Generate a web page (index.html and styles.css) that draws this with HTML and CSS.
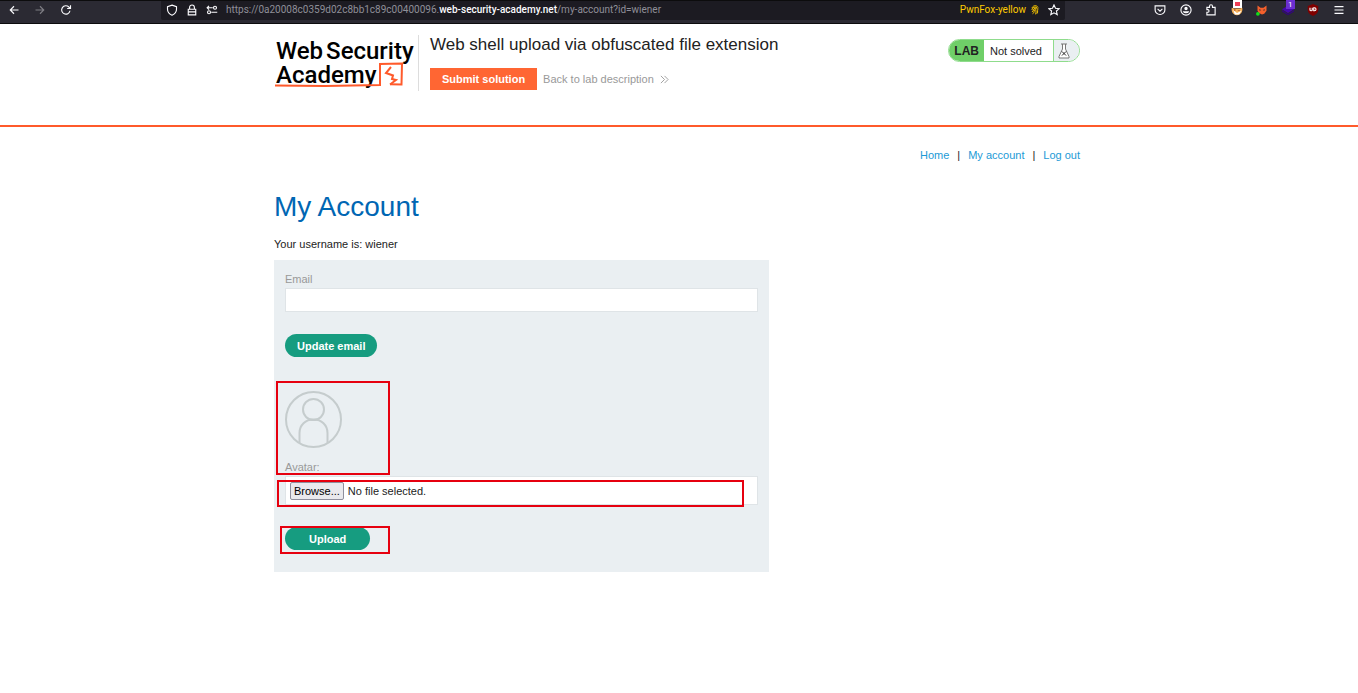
FILE: index.html
```html
<!DOCTYPE html>
<html lang="en">
<head>
  <meta charset="utf-8">
  <title>Web shell upload via obfuscated file extension</title>
  <link rel="stylesheet" href="styles.css">
</head>
<body>
  <div class="toolbar">
    <div class="toolbar-nav">
      <button type="button" aria-label="Back">
        <svg viewBox="0 0 16 16"><path d="M14 8H3M8 3 3 8l5 5"/></svg>
      </button>
      <button type="button" class="dim" aria-label="Forward">
        <svg viewBox="0 0 16 16"><path d="M2 8h11M8 3l5 5-5 5"/></svg>
      </button>
      <button type="button" aria-label="Reload">
        <svg viewBox="0 0 16 16"><path d="M13.3 9A5.6 5.6 0 1 1 11.800 4L13.500 5.600M14 1.500V6H9.500"/></svg>
      </button>
    </div>
    <div class="address">
      <svg viewBox="0 0 16 16"><path d="M8 1.500 14 3.600V7c0 4-2.500 6.500-6 8-3.500-1.500-6-4-6-8V3.600z"/></svg>
      <svg viewBox="0 0 16 16"><path d="M4.800 7V4.500a3.200 3.200 0 0 1 6.400 0V7M3 7h10v7.500H3zM3 10.500h10"/></svg>
      <svg viewBox="0 0 16 16"><path d="M1 5h8M7 11h8M4 2.500 1.500 5 4 7.500"/><circle cx="12" cy="5" r="2"/><circle cx="4" cy="11" r="2"/></svg>
      <div class="url">https://0a20008c0359d02c8bb1c89c00400096.<b>web-security-academy.net</b>/my-account?id=wiener</div>
      <span class="container-name">PwnFox-yellow</span>
      <svg class="finger" viewBox="0 0 16 16"><path d="M3 5c2-5 8-5 10-1M3 8c1-6 9-6 10-1M3 11c3 0 2-6 5-6s5 3 4 7M4 14c4-1 2-7 4-7s2 4 1 8M11 14l1-3"/></svg>
      <button type="button" aria-label="Bookmark">
        <svg viewBox="0 0 16 16"><path d="M8 1.200 10 5.700l4.900.5-3.700 3.200 1.100 4.900L8 11.800l-4.300 2.500 1.100-4.900L1.100 6.200 6 5.700z"/></svg>
      </button>
    </div>
    <div class="toolbar-ext">
      <button type="button" aria-label="Pocket">
        <svg viewBox="0 0 16 16"><path d="M1.500 2.500h13V8a6.500 6 0 0 1-13 0zM4.800 6.500 8 9.500l3.200-3"/></svg>
      </button>
      <button type="button" aria-label="Account">
        <svg viewBox="0 0 16 16"><circle cx="8" cy="8" r="6.800"/><circle class="solid" cx="8" cy="6" r="1.500"/><path class="solid" d="M5 10.500h6c-1 1.500-5 1.500-6 0z"/></svg>
      </button>
      <button type="button" aria-label="Extensions">
        <svg viewBox="0 0 16 16"><path d="M6 4.500V3a2 2 0 0 1 4 0v1.500h3.500v10h-11v-3.500H4a1.800 1.800 0 0 0 0-3.500H2.500v-3z"/></svg>
      </button>
      <button type="button" class="ext" aria-label="FoxyProxy">
        <svg viewBox="0 0 16 16"><path fill="#f6b25c" d="M1 5l3 1h8l3-1c1 5-2 10-7 10S0 10 1 5z"/><path fill="#fff" d="M3 8l5 4 6-3-3 5H5z"/><path fill="#b65b2a" d="M4 7h2v2H4zM9 8h3v1H9z"/></svg>
        <span class="badge badge-stop"></span>
      </button>
      <button type="button" class="ext" aria-label="PwnFox">
        <svg viewBox="0 0 16 16"><path fill="#f4602c" d="M2 2l4 3h4l4-3v7l-3 4-3 1-4-2-2-3z"/><path fill="#2b2a33" d="M4 7l3 1-2 1zM12 7L9 8l2 1z"/><circle cx="2.500" cy="13" r="2.500" fill="#12e01a"/></svg>
      </button>
      <button type="button" class="ext" aria-label="Wappalyzer">
        <svg viewBox="0 0 16 16"><path fill="#4608ad" d="M8 2l8 5-8 5-8-5z"/><path fill="#32067c" d="M0 8l8 5 8-5v2l-8 5-8-5z"/></svg>
        <span class="badge badge-count">1</span>
      </button>
      <button type="button" class="ext" aria-label="uBlock">
        <svg viewBox="0 0 16 16"><path fill="#800000" d="M8 0l7 2.500V8c0 4-4 6.500-7 8-3-1.500-7-4-7-8V2.500z"/><path stroke="#fff" fill="none" d="M4 5v3q0 1 1.500 1T7 8V5M9 5v4h1q2 0 2-2t-2-2z"/></svg>
      </button>
      <button type="button" aria-label="Menu">
        <svg viewBox="0 0 16 16"><path d="M2 3.500h12M2 8h12M2 12.500h12"/></svg>
      </button>
    </div>
  </div>

  <header class="lab-header">
    <div class="container lab-row">
      <a class="logo" href="#">
        <span class="logo-line"><span>Web</span><span>Security</span></span>
        <span class="logo-line">Academy</span>
        <svg class="logo-mark" viewBox="0 0 140 30"><path d="M0 25.500 50 26 105 25V4L127 3.500 126.500 24.500 115 24.300"/><path d="M116 7l-5 6 7 2.500-1 3.500 4 1-6 4.500"/></svg>
      </a>
      <div class="title">
        <h2>Web shell upload via obfuscated file extension</h2>
        <div class="actions">
          <button type="button" class="submit">Submit solution</button>
          <a class="back" href="#">Back to lab description
            <svg viewBox="0 0 10 10"><path d="M1 1l4 4-4 4M5 1l4 4-4 4"/></svg>
          </a>
        </div>
      </div>
      <div class="status">
        <span class="status-lab">LAB</span>
        <span class="status-text">Not solved</span>
        <span class="status-icon">
          <svg viewBox="0 0 12 16"><path fill="#fff" d="M3 1h6M4.500 1v5L1 13.500V15h10v-1.500L7.500 6V1"/><path class="cross" d="M4 8.500l4 4M8 8.500l-4 4"/></svg>
        </span>
      </div>
    </div>
  </header>

  <main class="container">
    <nav class="top-links">
      <a href="#">Home</a><span>|</span><a href="#">My account</a><span>|</span><a href="#">Log out</a>
    </nav>
    <h1>My Account</h1>
    <p class="username">Your username is: wiener</p>

    <div class="panel">
      <form>
        <label for="email">Email</label>
        <input type="email" id="email">
        <button type="submit" class="button">Update email</button>
      </form>
      <form class="avatar-form">
        <div class="avatar">
          <svg viewBox="0 0 57 57"><circle cx="28.500" cy="28.500" r="27.500"/><circle cx="28.500" cy="18.500" r="10.500"/><path d="M14.500 52V42c0-8 6-13.500 14-13.500s14 5.500 14 13.500v10"/></svg>
          <label for="avatar">Avatar:</label>
          <div class="mark mark-avatar"></div>
        </div>
        <div class="file">
          <input type="file" id="avatar">
          <span class="browse">Browse...</span>
          <span>No file selected.</span>
          <div class="mark mark-file"></div>
        </div>
        <div class="upload">
          <button type="submit" class="button button-upload">Upload</button>
          <div class="mark mark-upload"></div>
        </div>
      </form>
    </div>
  </main>
</body>
</html>
```
FILE: styles.css
```css
* {
  box-sizing: border-box;
}

body {
  margin: 0;
  background: #fff;
  color: #222;
  font-family: "Liberation Sans", Arial, sans-serif;
  font-size: 11px;
  line-height: 16px;
}

button,
input {
  font-family: inherit;
  font-size: inherit;
}

button {
  border: 0;
  padding: 0;
  background: none;
  cursor: pointer;
}

a {
  text-decoration: none;
}

/* browser toolbar */
.toolbar {
  display: flex;
  height: 24px;
  background: #2b2a33;
  border-top: 1px solid #0c0c0d;
  border-bottom: 1px solid #0c0c0d;
  font-family: Roboto, "Noto Sans", sans-serif;
  font-size: 10px;
}

.toolbar svg {
  display: block;
  width: 12px;
  height: 12px;
  flex: none;
  fill: none;
  stroke: #fbfbfe;
  stroke-width: 1.5;
}

.toolbar .solid {
  fill: #fbfbfe;
}

.toolbar-nav {
  display: flex;
  align-items: center;
  gap: 14px;
  width: 161px;
  padding: 0 0 4px 8px;
}

.toolbar-nav .dim {
  opacity: 0.4;
}

.address {
  display: flex;
  align-items: center;
  gap: 8px;
  flex: 1;
  height: 19px;
  padding: 0 5px 2px;
  background: #1c1b22;
  border-radius: 0 0 2px 2px;
}

.url {
  flex: 1;
  color: #8f8f98;
  white-space: nowrap;
}

.url b {
  color: #fbfbfe;
  font-weight: 500;
}

.container-name {
  color: #ffcb00;
}

.toolbar .finger {
  width: 10px;
  margin-left: -4px;
  stroke: #ffcb00;
}

.toolbar-ext {
  display: flex;
  align-items: center;
  justify-content: space-between;
  width: 293px;
  padding: 0 13px 4px 89px;
}

.ext {
  position: relative;
}

.toolbar .ext svg {
  stroke: none;
}

.badge {
  position: absolute;
  top: -4px;
  left: 4px;
  width: 9px;
  height: 9px;
}

.badge-stop {
  left: 2px;
  height: 8px;
  background: #ef4056;
  border: 2px solid #fff;
}

.badge-count {
  background: #6b2fd0;
  color: #fff;
  font-size: 8px;
  line-height: 9px;
}

/* lab banner */
.container {
  max-width: 810px;
  margin: 0 auto;
  padding-right: 4px;
}

.lab-header {
  border-bottom: 2px solid #ff5a2b;
}

.lab-row {
  display: flex;
  align-items: flex-start;
  height: 101px;
  padding-top: 11px;
}

.logo {
  position: relative;
  width: 145px;
  height: 56px;
  padding: 4px 0 0 2px;
  border-right: 1px solid #ddd;
  color: #000;
  font-family: Roboto, sans-serif;
  font-size: 24px;
  font-weight: 500;
  line-height: 24px;
}

.logo-line {
  display: flex;
  gap: 3px;
}

.logo-mark {
  position: absolute;
  left: 1px;
  bottom: 1px;
  width: 140px;
  height: 30px;
  fill: none;
  stroke: #ff5a2b;
  stroke-width: 2;
}

.title {
  flex: 1;
  padding-left: 11px;
}

h2 {
  margin: 0;
  font-size: 17px;
  font-weight: normal;
  line-height: 20px;
}

.actions {
  display: flex;
  align-items: center;
  gap: 6px;
  margin-top: 13px;
}

.submit {
  height: 22px;
  padding: 0 12px;
  background: #f63;
  color: #fff;
  font-weight: bold;
}

.back {
  display: flex;
  align-items: center;
  gap: 6px;
  color: #999;
}

.back svg {
  width: 9px;
  height: 9px;
  fill: none;
  stroke: #999;
}

.status {
  display: flex;
  align-items: stretch;
  height: 23px;
  margin-top: 4px;
  border: 1px solid #8fdc8c;
  border-radius: 12px;
  overflow: hidden;
  line-height: 22px;
}

.status-lab {
  padding: 0 5px;
  background: #6fcf68;
  font-size: 12px;
  font-weight: bold;
}

.status-text {
  padding: 0 11px 0 6px;
}

.status-icon {
  display: flex;
  align-items: center;
  width: 26px;
  padding-left: 4px;
  background: #eaeff2;
  border-left: 1px solid #8fdc8c;
}

.status-icon svg {
  width: 12px;
  height: 16px;
  fill: none;
  stroke: #777;
}

.status-icon .cross {
  stroke: #222;
}

/* account page */
.top-links {
  display: flex;
  justify-content: flex-end;
  gap: 8px;
  padding-top: 20px;
}

.top-links a {
  color: #1c9ad6;
}

h1 {
  margin: 28px 0 0;
  color: #0066b3;
  font-size: 28px;
  font-weight: normal;
  line-height: 32px;
}

.username {
  margin: 13px 0 8px;
}

.panel {
  max-width: 495px;
  padding: 11px 11px 22px;
  background: #eaeff2;
}

.panel label {
  display: block;
  margin-bottom: 1px;
  color: #999;
}

#email {
  display: block;
  width: 100%;
  height: 24px;
  border: 1px solid #dfe4e7;
  background: #fff;
}

.button {
  display: block;
  height: 23px;
  margin-top: 22px;
  padding: 0 12px;
  border-radius: 12px;
  background: #169c80;
  color: #fff;
  font-weight: bold;
}

.button-upload {
  padding: 0 24px;
}

.avatar-form {
  margin-top: 34px;
}

.avatar,
.upload {
  position: relative;
}

.avatar svg {
  display: block;
  width: 57px;
  height: 57px;
  margin-bottom: 11px;
  fill: none;
  stroke: #c5cccd;
  stroke-width: 2;
}

.file {
  position: relative;
  display: flex;
  align-items: center;
  gap: 4px;
  height: 29px;
  padding: 0 4px;
  background: #fff;
  border: 1px solid #dfe4e7;
}

.file input {
  position: absolute;
  inset: 0;
  width: 100%;
  opacity: 0;
}

.browse {
  padding: 0 3px;
  border: 1px solid #8f8f9d;
  border-radius: 2px;
  background: #e9e9ed;
  color: #000;
}

/* red highlight boxes over the form */
.mark {
  position: absolute;
  border: 2px solid #e6000f;
  pointer-events: none;
}

.mark-avatar {
  top: -10px;
  left: -9px;
  width: 114px;
  height: 94px;
}

.mark-file {
  top: 3px;
  bottom: -3px;
  left: -9px;
  right: 13px;
}

.mark-upload {
  top: -1px;
  left: -5px;
  width: 110px;
  height: 28px;
}
```
